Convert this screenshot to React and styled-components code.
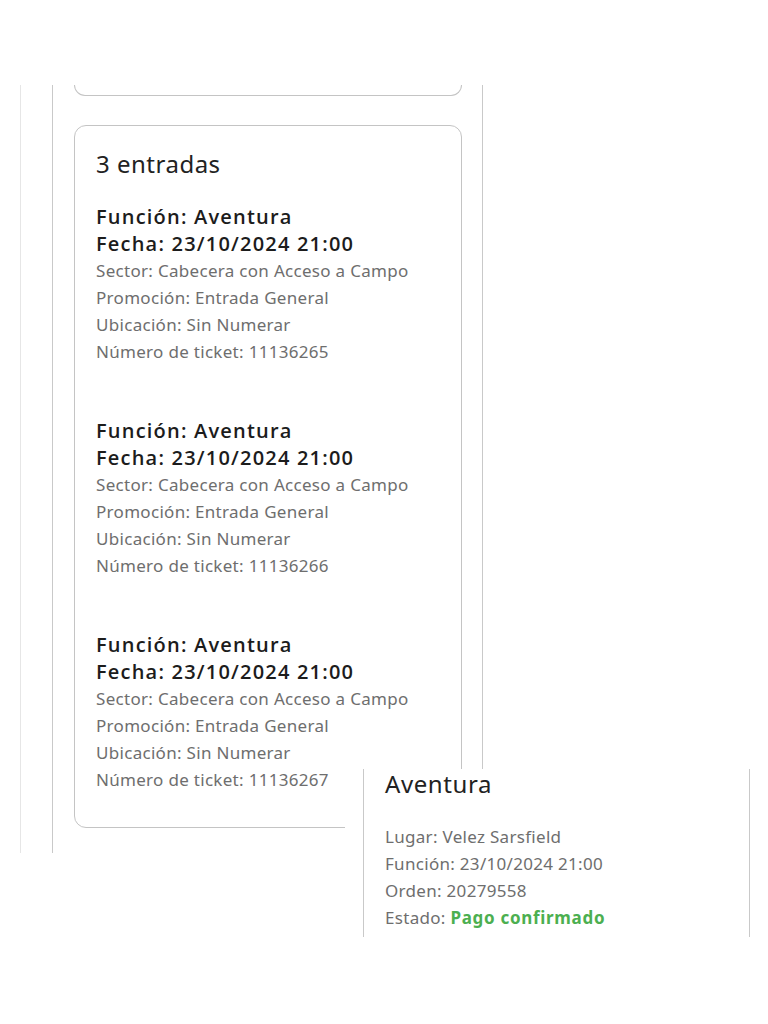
import React from 'react';
import styled, { createGlobalStyle } from 'styled-components';

const GlobalStyle = createGlobalStyle`
  body {
    margin: 0;
    background: #fff;
    font-family: 'Noto Sans', 'Open Sans', sans-serif;
  }
`;

const Page = styled.div`
  position: relative;
  width: 768px;
  height: 1024px;
  padding-top: 85px;
  box-sizing: border-box;
  overflow: hidden;
`;

const Outer = styled.div`
  margin-left: 20px;
  width: 463px;
  border-left: 1px solid #e6e6e6;
  padding-left: 31px;
`;

const Column = styled.div`
  border-left: 1px solid #c9c9c9;
  border-right: 1px solid #c9c9c9;
  padding: 0 20px 25px 21px;
  box-sizing: border-box;
  width: 431px;
`;

const CardTail = styled.div`
  height: 10px;
  border: 1px solid #c4c4c4;
  border-top: none;
  border-radius: 0 0 12px 12px;
`;

const Card = styled.div`
  margin-top: 29px;
  border: 1px solid #c4c4c4;
  border-radius: 12px;
  padding: 23px 20px 34px 21px;
`;

const Title = styled.div`
  font-size: 24px;
  line-height: 30px;
  letter-spacing: 0.5px;
  color: #222;
  margin-bottom: 24px;
`;

const Ticket = styled.div`
  & + & {
    margin-top: 52px;
  }
`;

const Strong = styled.div`
  font-family: 'Open Sans', 'Noto Sans', sans-serif;
  font-size: 20px;
  line-height: 27px;
  font-weight: 600;
  letter-spacing: 1.2px;
  color: #1c1c1c;
`;

const Line = styled.div`
  font-size: 17px;
  line-height: 27px;
  letter-spacing: 0.3px;
  color: #6e6e6e;
`;

const Overlay = styled.div`
  position: absolute;
  left: 345px;
  top: 769px;
  width: 423px;
  background: #fff;
  padding-left: 18px;
  box-sizing: border-box;
`;

const Summary = styled.div`
  width: 387px;
  border-left: 1px solid #c9c9c9;
  border-right: 1px solid #c9c9c9;
  padding: 0 0 6px 21px;
  box-sizing: border-box;
`;

const Heading = styled.div`
  font-size: 24px;
  line-height: 30px;
  letter-spacing: 0.6px;
  color: #222;
  margin-bottom: 24px;
`;

const Status = styled.span`
  color: #4caf50;
  font-weight: 700;
  letter-spacing: 0.7px;
`;

const tickets = ['11136265', '11136266', '11136267'];

export default function App() {
  return (
    <>
      <GlobalStyle />
      <Page>
        <Outer>
          <Column>
            <CardTail />
            <Card>
              <Title>3 entradas</Title>
              {tickets.map((t) => (
                <Ticket key={t}>
                  <Strong>Función: Aventura</Strong>
                  <Strong>Fecha: 23/10/2024 21:00</Strong>
                  <Line>Sector: Cabecera con Acceso a Campo</Line>
                  <Line>Promoción: Entrada General</Line>
                  <Line>Ubicación: Sin Numerar</Line>
                  <Line>Número de ticket: {t}</Line>
                </Ticket>
              ))}
            </Card>
          </Column>
        </Outer>
        <Overlay>
          <Summary>
            <Heading>Aventura</Heading>
            <Line>Lugar: Velez Sarsfield</Line>
            <Line>Función: 23/10/2024 21:00</Line>
            <Line>Orden: 20279558</Line>
            <Line>
              Estado: <Status>Pago confirmado</Status>
            </Line>
          </Summary>
        </Overlay>
      </Page>
    </>
  );
}
